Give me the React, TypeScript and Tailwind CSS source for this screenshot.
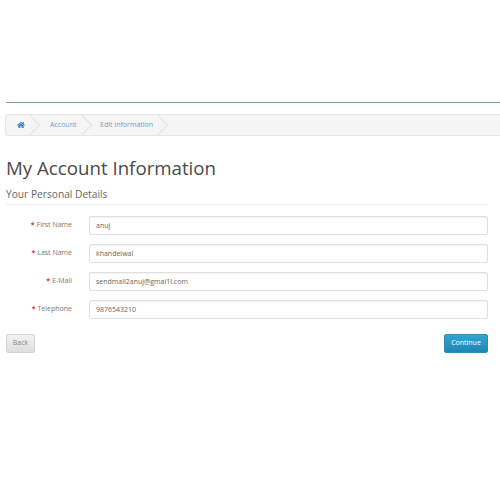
import { FaHome } from "react-icons/fa";

const fields = [
  { label: "First Name", value: "anuj" },
  { label: "Last Name", value: "khandelwal" },
  { label: "E-Mail", value: "sendmail2anuj@gmai1l.com" },
  { label: "Telephone", value: "9876543210" },
];

function Crumb({ children, className }: { children: React.ReactNode; className: string }) {
  return (
    <li className={`relative flex items-center ${className}`}>
      {children}
      {/* chevron between crumbs */}
      <span className="absolute right-[-1px] top-[2px] w-[16px] h-[16px] rotate-45 border-t border-r border-[#e2e2e2]" />
    </li>
  );
}

export default function App() {
  return (
    <div className="w-[500px] h-[500px] overflow-hidden bg-white pt-[102px] pl-[6px] font-['Open_Sans',sans-serif] text-[#666]">
      <div className="h-px bg-[#7a9fb0]" />

      <ul className="mt-[11px] -ml-px h-[22px] flex items-stretch bg-[#f5f5f5] border border-r-0 border-[#e8e8e8] rounded-l-[3px] overflow-hidden text-[7px] text-[#6ba3cb]">
        <Crumb className="w-[30px] pl-[11px]">
          <FaHome className="w-[8px] h-[8px] text-[#3f85bd]" />
        </Crumb>
        <Crumb className="w-[52px] pl-[14px]">Account</Crumb>
        <Crumb className="w-[76px] pl-[12px]">Edit Information</Crumb>
      </ul>

      <h1 className="mt-[17px] text-[18.7px] leading-[30px] text-[#4a4a4a]">My Account Information</h1>

      <div className="mt-[4px] pr-[12px]">
        <h2 className="text-[10.2px] leading-[14px] text-[#666] pb-[3px] border-b border-[#eeeeee]">Your Personal Details</h2>

        <form className="mt-[11px] flex flex-col gap-[9px]">
          {fields.map((f) => (
            <div key={f.label} className="flex items-center">
              <label className="w-[66px] text-right text-[7px] text-[#777]">
                <span className="text-[#e0314b] font-bold mr-[2px]">*</span>
                {f.label}
              </label>
              <input
                readOnly
                value={f.value}
                className="ml-[17px] flex-1 h-[19px] px-[6px] bg-white border border-[#e0e0e0] rounded-[2px] text-[7px] text-[#666] shadow-[inset_0_1px_1px_rgba(0,0,0,0.05)] outline-none"
              />
            </div>
          ))}
        </form>

        <div className="mt-[15px] flex justify-between">
          <button className="w-[29px] h-[19px] rounded-[2px] border border-[#d4d4d4] bg-gradient-to-b from-[#f2f2f2] to-[#dedede] text-[7px] text-[#888]">
            Back
          </button>
          <button className="w-[44px] h-[19px] rounded-[2px] border border-[#2a8bb3] bg-gradient-to-b from-[#2fa6d3] to-[#1f86b4] text-[7px] text-white">
            Continue
          </button>
        </div>
      </div>
    </div>
  );
}
